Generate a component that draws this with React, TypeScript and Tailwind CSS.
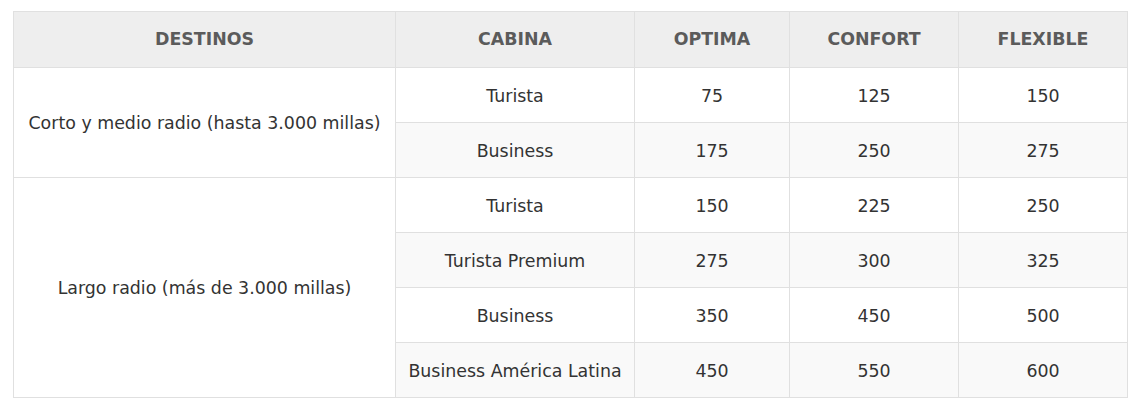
const headers = ["DESTINOS", "CABINA", "OPTIMA", "CONFORT", "FLEXIBLE"];

const groups = [
  {
    destino: "Corto y medio radio (hasta 3.000 millas)",
    rows: [
      { cabina: "Turista", optima: 75, confort: 125, flexible: 150 },
      { cabina: "Business", optima: 175, confort: 250, flexible: 275 },
    ],
  },
  {
    destino: "Largo radio (más de 3.000 millas)",
    rows: [
      { cabina: "Turista", optima: 150, confort: 225, flexible: 250 },
      { cabina: "Turista Premium", optima: 275, confort: 300, flexible: 325 },
      { cabina: "Business", optima: 350, confort: 450, flexible: 500 },
      { cabina: "Business América Latina", optima: 450, confort: 550, flexible: 600 },
    ],
  },
];

const cell = "border border-[#e0e0e0] text-center align-middle";

export default function App() {
  let rowIndex = 0;

  return (
    <div className="min-h-screen bg-white pt-[11px] pl-[13px] font-['DejaVu_Sans',sans-serif]">
      <table className="w-[1114px] table-fixed border-collapse text-[17.4px] text-[#333333]">
        <colgroup>
          <col className="w-[382px]" />
          <col className="w-[239px]" />
          <col className="w-[155px]" />
          <col className="w-[169px]" />
          <col className="w-[169px]" />
        </colgroup>
        <thead>
          <tr className="h-[56px] bg-[#eeeeee]">
            {headers.map((h) => (
              <th key={h} className={`${cell} font-bold text-[17.4px] text-[#5b5b5b]`}>
                {h}
              </th>
            ))}
          </tr>
        </thead>
        <tbody>
          {groups.map((g) =>
            g.rows.map((r, i) => {
              rowIndex += 1;
              const striped = rowIndex % 2 === 0;
              return (
                <tr key={g.destino + r.cabina} className={`h-[55px] ${striped ? "bg-[#f9f9f9]" : "bg-white"}`}>
                  {i === 0 && (
                    <td rowSpan={g.rows.length} className={`${cell} bg-white pt-[2px]`}>
                      {g.destino}
                    </td>
                  )}
                  <td className={`${cell} pt-[2px]`}>{r.cabina}</td>
                  <td className={`${cell} pt-[2px]`}>{r.optima}</td>
                  <td className={`${cell} pt-[2px]`}>{r.confort}</td>
                  <td className={`${cell} pt-[2px]`}>{r.flexible}</td>
                </tr>
              );
            })
          )}
        </tbody>
      </table>
    </div>
  );
}
